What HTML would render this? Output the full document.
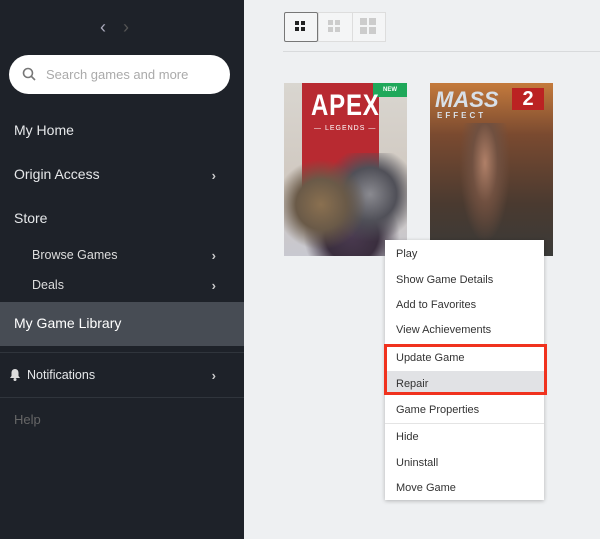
<!DOCTYPE html>
<html><head><style>
body{margin:0;width:600px;height:539px;overflow:hidden;background:#eef0f2;font-family:"Liberation Sans",sans-serif;position:relative}
.sb{position:absolute;left:0;top:0;width:244px;height:539px;background:#1e2229;color:#e6e8ea}
.a{position:absolute;font-size:14px}
.chev{position:absolute;right:28px;font-size:13px;color:#ccc;font-weight:bold}
.menu{position:absolute;left:385px;top:240px;width:159px;height:260px;background:#fff;box-shadow:0 1px 4px rgba(0,0,0,.25);font-size:11px;color:#333}
.menu div{position:absolute;left:11px}
</style></head><body>
<div class="sb">
<div class="a" style="left:100px;top:17px;font-size:18px;color:#aab">&#8249;</div>
<div class="a" style="left:123px;top:17px;font-size:18px;color:#555">&#8250;</div>
<div style="position:absolute;left:9px;top:55px;width:221px;height:39px;border-radius:20px;background:#fff"></div>
<svg style="position:absolute;left:22px;top:67px" width="14" height="14"><circle cx="6" cy="6" r="4.5" fill="none" stroke="#777" stroke-width="1.6"/><line x1="9.5" y1="9.5" x2="13" y2="13" stroke="#777" stroke-width="1.6"/></svg>
<div class="a" style="left:46px;top:67px;font-size:13px;color:#aaa">Search games and more</div>
<div class="a" style="left:14px;top:122px">My Home</div>
<div class="a" style="left:14px;top:166px">Origin Access</div><div class="chev" style="top:168px">›</div>
<div class="a" style="left:14px;top:210px">Store</div>
<div class="a" style="left:32px;top:248px;font-size:12.5px;color:#ddd">Browse Games</div><div class="chev" style="top:248px">›</div>
<div class="a" style="left:32px;top:278px;font-size:12.5px;color:#ddd">Deals</div><div class="chev" style="top:278px">›</div>
<div style="position:absolute;left:0;top:302px;width:244px;height:44px;background:#474c54"></div>
<div class="a" style="left:14px;top:315px;color:#fff">My Game Library</div>
<div style="position:absolute;left:0;top:352px;width:244px;height:1px;background:#30353c"></div>
<svg style="position:absolute;left:9px;top:368px" width="12" height="13"><path d="M6 1C3.5 1 2.5 3 2.5 5v3L1 10h10L9.5 8V5C9.5 3 8.5 1 6 1z" fill="#ddd"/><circle cx="6" cy="11.5" r="1.5" fill="#ddd"/></svg>
<div class="a" style="left:27px;top:368px;font-size:12.5px">Notifications</div><div class="chev" style="top:368px">›</div>
<div style="position:absolute;left:0;top:397px;width:244px;height:1px;background:#30353c"></div>
<div class="a" style="left:14px;top:412px;font-size:13px;color:#666">Help</div>
</div>
<div style="position:absolute;left:284px;top:12px;width:32px;height:28px;border:1px solid #777;border-radius:2px;background:#f4f5f6"></div>
<div style="position:absolute;left:318px;top:12px;width:33px;height:28px;border:1px solid #ddd;background:#f4f5f6"></div>
<div style="position:absolute;left:352px;top:12px;width:32px;height:28px;border:1px solid #ddd;background:#f4f5f6"></div>
<svg style="position:absolute;left:294px;top:20px" width="12" height="12"><rect x="1" y="1" width="4" height="4" fill="#222"/><rect x="7" y="1" width="4" height="4" fill="#222"/><rect x="1" y="7" width="4" height="4" fill="#222"/><rect x="7" y="7" width="4" height="4" fill="#222"/></svg>
<svg style="position:absolute;left:328px;top:20px" width="12" height="12"><rect x="0" y="0" width="5" height="5" fill="#ccc"/><rect x="7" y="0" width="5" height="5" fill="#ccc"/><rect x="0" y="7" width="5" height="5" fill="#ccc"/><rect x="7" y="7" width="5" height="5" fill="#ccc"/></svg>
<svg style="position:absolute;left:360px;top:18px" width="16" height="16"><rect x="0" y="0" width="7" height="7" fill="#ccc"/><rect x="9" y="0" width="7" height="7" fill="#ccc"/><rect x="0" y="9" width="7" height="7" fill="#ccc"/><rect x="9" y="9" width="7" height="7" fill="#ccc"/></svg>
<div style="position:absolute;left:283px;top:51px;width:317px;height:1px;background:#d8dadc"></div>
<div style="position:absolute;left:284px;top:83px;width:123px;height:173px;background:linear-gradient(#d9d6d0 0,#d0c8c0 60%,#c8c8d0 100%);overflow:hidden">
<div style="position:absolute;left:18px;top:0;width:77px;height:110px;background:#b82a31"></div>
<div style="position:absolute;left:89px;top:0;width:34px;height:14px;background:#1fa85a;color:#fff;font-size:6px;text-align:center;line-height:14px;font-weight:bold">NEW</div>
<div style="position:absolute;left:27px;top:6px;color:#fff;font-size:30px;font-weight:bold;letter-spacing:1px;transform:scaleX(.8);transform-origin:left">APEX</div>
<div style="position:absolute;left:30px;top:42px;color:#fff;font-size:7px;letter-spacing:1px">— LEGENDS —</div>
<div style="position:absolute;left:0;top:70px;width:123px;height:103px;background:radial-gradient(circle at 30% 50%,#8a7050 0,#6a5a48 25%,transparent 45%),radial-gradient(circle at 70% 40%,#8a8a90 0,#505058 25%,transparent 45%),radial-gradient(circle at 55% 80%,#4a3a50 0,#3a2e3e 25%,transparent 45%)"></div>
</div>
<div style="position:absolute;left:430px;top:83px;width:123px;height:173px;background:linear-gradient(#c47a3c,#7a4a30 30%,#4a3a30 70%,#3a3a38);overflow:hidden">
<div style="position:absolute;left:25px;top:40px;width:60px;height:133px;background:radial-gradient(ellipse at 50% 30%,#b08068 0,#705040 30%,transparent 60%)"></div>
<div style="position:absolute;left:5px;top:4px;color:#d8e0e8;font-size:22px;font-weight:bold;font-style:italic">MASS</div>
<div style="position:absolute;left:7px;top:28px;color:#d8e0e8;font-size:8px;font-weight:bold;letter-spacing:3px">EFFECT</div>
<div style="position:absolute;left:82px;top:5px;width:32px;height:22px;background:#b22;color:#fff;font-size:20px;font-weight:bold;text-align:center">2</div>
</div>
<div class="menu">
<div style="top:8px">Play</div>
<div style="top:34px">Show Game Details</div>
<div style="top:59px">Add to Favorites</div>
<div style="top:84px">View Achievements</div>
<div style="left:0;top:131px;width:159px;height:24px;background:#e1e2e5"></div>
<div style="top:112px">Update Game</div>
<div style="top:138px">Repair</div>
<div style="top:164px">Game Properties</div>
<div style="left:0;top:183px;width:159px;height:1px;background:#e4e4e4"></div>
<div style="top:191px">Hide</div>
<div style="top:217px">Uninstall</div>
<div style="top:242px">Move Game</div>
</div>
<div style="position:absolute;left:384px;top:344px;width:157px;height:45px;border:3px solid #f0321e"></div>
</body></html>
